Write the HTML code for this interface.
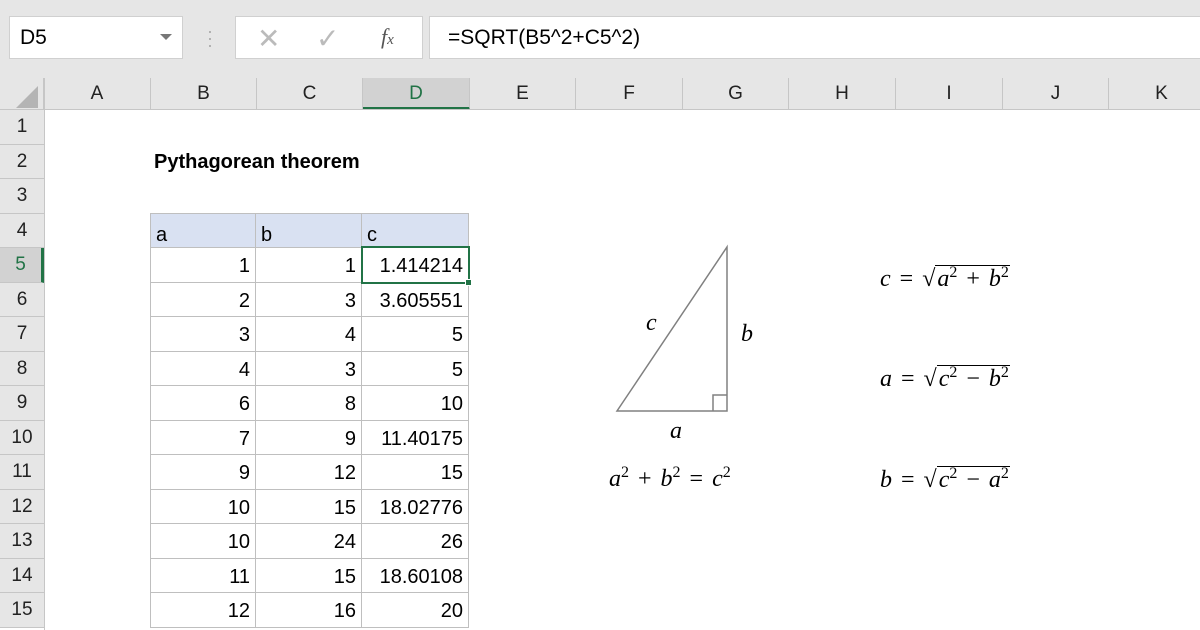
<!DOCTYPE html><html><head><style>
*{margin:0;padding:0;box-sizing:border-box}
body{width:1200px;height:630px;overflow:hidden;background:#fff;font-family:"Liberation Sans",sans-serif;position:relative}
.a{position:absolute}
.ch{position:absolute;top:78px;height:32px;border-right:1px solid #c6c6c6;text-align:center;font-size:19px;line-height:32px;color:#222;background:#e6e6e6}
.rh{position:absolute;left:0;width:44px;border-bottom:1px solid #c6c6c6;text-align:center;font-size:19px;color:#222;background:#e6e6e6}
.c{position:absolute;border-right:1px solid #bfbfbf;border-bottom:1px solid #bfbfbf;font-size:20px;color:#000;padding:0 5px;text-align:right;line-height:36px}
.m{position:absolute;font-family:"Liberation Serif",serif;font-style:italic;font-size:24px;white-space:nowrap;word-spacing:3px}
.m sup{font-size:16px;font-style:normal}
.sq{border-top:1.5px solid #000;padding-left:2px;padding-right:1px}
.r{font-style:normal}
</style></head><body>
<div class="a" style="left:0;top:0;width:1200px;height:78px;background:#e6e6e6"></div>
<div class="a" style="left:9px;top:16px;width:174px;height:43px;background:#fff;border:1px solid #d0d0d0;font-size:21px;line-height:41px;padding-left:10px">D5</div>
<div class="a" style="left:160px;top:34px;border-left:6px solid transparent;border-right:6px solid transparent;border-top:6px solid #777"></div>
<div class="a" style="left:207px;top:28px;color:#aaa;font-size:18px;line-height:7px">·<br>·<br>·</div>
<div class="a" style="left:235px;top:16px;width:188px;height:43px;background:#fff;border:1px solid #d0d0d0"></div>
<div class="a" style="left:257px;top:22px;font-size:28px;color:#bbb">✕</div>
<div class="a" style="left:316px;top:22px;font-size:28px;color:#bbb">✓</div>
<div class="a" style="left:381px;top:24px;font-family:'Liberation Serif',serif;font-style:italic;font-size:22px;color:#555">f<span style="font-size:15px">x</span></div>
<div class="a" style="left:429px;top:16px;width:780px;height:43px;background:#fff;border:1px solid #d0d0d0;font-size:21px;line-height:41px;padding-left:18px">=SQRT(B5^2+C5^2)</div>
<div class="a" style="left:0;top:78px;width:44px;height:32px;background:#e6e6e6;border-right:1px solid #c6c6c6"></div>
<div class="a" style="left:16px;top:86px;border-left:22px solid transparent;border-bottom:22px solid #b4b4b4"></div>
<div class="ch" style="left:44px;width:107px">A</div>
<div class="ch" style="left:151px;width:106px">B</div>
<div class="ch" style="left:257px;width:106px">C</div>
<div class="ch" style="left:363px;width:107px;background:#d2d2d2;color:#217346;border-bottom:3px solid #217346">D</div>
<div class="ch" style="left:470px;width:106px">E</div>
<div class="ch" style="left:576px;width:107px">F</div>
<div class="ch" style="left:683px;width:106px">G</div>
<div class="ch" style="left:789px;width:107px">H</div>
<div class="ch" style="left:896px;width:107px">I</div>
<div class="ch" style="left:1003px;width:106px">J</div>
<div class="ch" style="left:1109px;width:106px">K</div>
<div class="a" style="left:0;top:109px;width:1200px;height:1px;background:#c6c6c6"></div>
<div class="a" style="left:44px;top:78px;width:1px;height:552px;background:#c6c6c6"></div>
<div id="rows"></div>
<div class="a" style="left:154px;top:151px;font-size:20px;font-weight:bold">Pythagorean theorem</div>
<div id="tbl"></div>
<svg class="a" style="left:0;top:0" width="1200" height="630">
<path d="M617 411H727V247Z" fill="none" stroke="#808080" stroke-width="1.5"/>
<path d="M713 411V395H727" fill="none" stroke="#808080" stroke-width="1.5"/>
</svg>
<div class="m" style="left:646px;top:310px">c</div>
<div class="m" style="left:741px;top:321px">b</div>
<div class="m" style="left:670px;top:418px">a</div>
<div class="m" style="left:609px;top:464px">a<sup>2</sup> <span class="r">+</span> b<sup>2</sup> <span class="r">=</span> c<sup>2</sup></div>
<div class="m" style="left:880px;top:264px">c <span class="r">=</span> <span class="r">√</span><span class="sq">a<sup>2</sup> <span class="r">+</span> b<sup>2</sup></span></div>
<div class="m" style="left:880px;top:364px">a <span class="r">=</span> <span class="r">√</span><span class="sq">c<sup>2</sup> <span class="r">−</span> b<sup>2</sup></span></div>
<div class="m" style="left:880px;top:465px">b <span class="r">=</span> <span class="r">√</span><span class="sq">c<sup>2</sup> <span class="r">−</span> a<sup>2</sup></span></div>
<script>
var R=document.getElementById('rows'),h='';
for(var i=1;i<=15;i++){var t=110+(i-1)*34.5;
h+='<div class="rh" style="top:'+t+'px;height:34.5px;line-height:34px;'+(i==5?'background:#d2d2d2;color:#217346;border-right:3px solid #217346':'')+'">'+i+'</div>';}
R.innerHTML=h;
var d=[[1,1,'1.414214'],[2,3,'3.605551'],[3,4,5],[4,3,5],[6,8,10],[7,9,'11.40175'],[9,12,15],[10,15,'18.02776'],[10,24,26],[11,15,'18.60108'],[12,16,20]];
var T=document.getElementById('tbl'),s='';
var xs=[150,256,362],ws=[106,106,107];
function row(top,vals,hd){for(var j=0;j<3;j++){s+='<div class="c" style="left:'+xs[j]+'px;top:'+top+'px;width:'+ws[j]+'px;height:34.5px;'+(hd?'background:#d9e1f2;text-align:left;line-height:42px;':'')+(j==0?'border-left:1px solid #bfbfbf;':'')+'">'+vals[j]+'</div>';}}
s+='<div class="a" style="left:150px;top:213px;width:319px;height:1px;background:#bfbfbf"></div>';
row(213.5,['a','b','c'],1);
for(var k=0;k<d.length;k++)row(248+k*34.5,d[k],0);
s+='<div class="a" style="left:361px;top:246px;width:109px;height:38px;border:2.5px solid #217346"></div><div class="a" style="left:465px;top:279px;width:7px;height:7px;background:#217346;border:1px solid #fff"></div>';
T.innerHTML=s;
</script>
</body></html>
